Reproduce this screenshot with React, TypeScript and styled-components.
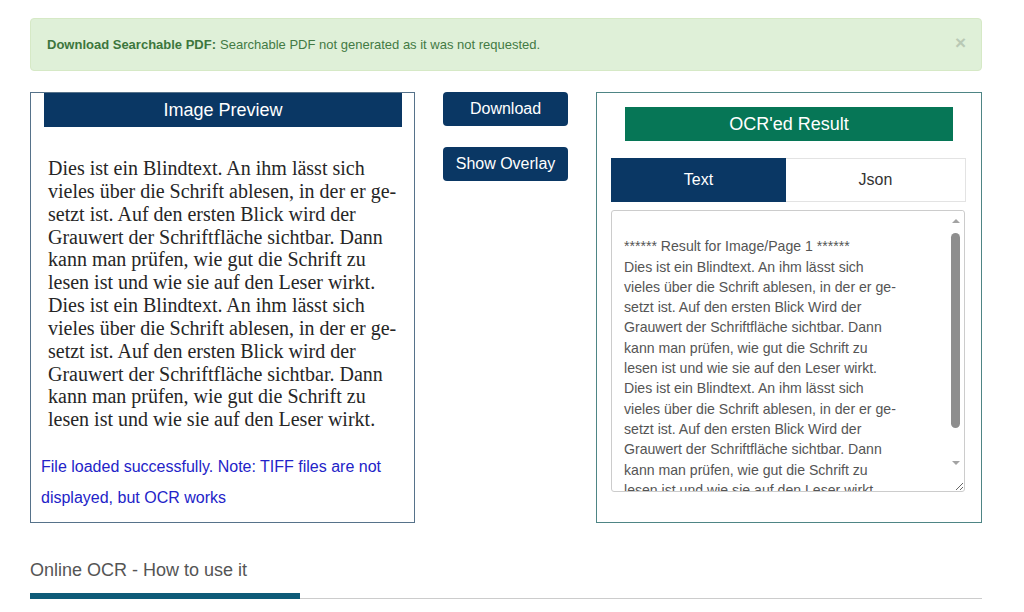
import React from 'react'
import styled, { createGlobalStyle } from 'styled-components'

const GlobalStyle = createGlobalStyle`
  html, body {
    margin: 0;
    padding: 0;
    background: #ffffff;
    font-family: "Liberation Sans", Arial, sans-serif;
  }
`

const navy = '#0a3764'

const Page = styled.div`
  width: 952px;
  padding: 18px 0 0 30px;
`

const Alert = styled.div`
  position: relative;
  height: 53px;
  box-sizing: border-box;
  padding: 0 16px;
  display: flex;
  align-items: center;
  background: #dff0d8;
  border: 1px solid #d6e9c6;
  border-radius: 4px;
  color: #437a44;
  font-size: 13px;

  strong {
    font-weight: bold;
    color: #3c763d;
    margin-right: 4px;
  }
`

const Close = styled.span`
  position: absolute;
  right: 15px;
  top: 13px;
  font-size: 19px;
  font-weight: bold;
  color: #b9c9b5;
`

const Row = styled.div`
  display: grid;
  grid-template-columns: 385px 181px 386px;
  margin-top: 21px;
`

const Panel = styled.div<{ $border: string }>`
  height: 431px;
  box-sizing: border-box;
  border: 1px solid ${(p) => p.$border};
`

const LeftPanel = styled(Panel)`
  padding: 0 12px 0 13px;
`

const RightPanel = styled(Panel)`
  padding: 14px 15px 0 14px;
`

const Bar = styled.div<{ $bg: string }>`
  height: 34px;
  display: flex;
  align-items: center;
  justify-content: center;
  background: ${(p) => p.$bg};
  color: #ffffff;
  font-size: 18px;
`

const ResultBar = styled(Bar)`
  margin: 0 13px 0 14px;
`

const SerifText = styled.div`
  margin: 30px 0 0 4px;
  font-family: "Liberation Serif", "Times New Roman", serif;
  font-size: 20px;
  line-height: 22.85px;
  color: #262626;
  white-space: nowrap;
`

const Note = styled.div`
  margin: 20px 0 0 -3px;
  color: #2323c8;
  font-size: 16px;
  line-height: 31px;
`

const Middle = styled.div`
  display: flex;
  flex-direction: column;
  gap: 21px;
  padding-left: 28px;
`

const Button = styled.button`
  width: 125px;
  height: 34px;
  border: none;
  border-radius: 4px;
  background: ${navy};
  color: #ffffff;
  font-family: "Liberation Sans", Arial, sans-serif;
  font-size: 16px;
  padding: 0;
`

const Tabs = styled.div`
  display: grid;
  grid-template-columns: 174px 1fr;
  height: 44px;
  margin-top: 17px;
  border: 1px solid #e3e3e3;
  box-sizing: border-box;
`

const Tab = styled.div<{ $active?: boolean }>`
  display: flex;
  align-items: center;
  justify-content: center;
  font-size: 16px;
  margin: ${(p) => (p.$active ? '-1px 0 -1px -1px' : '0')};
  background: ${(p) => (p.$active ? navy : '#ffffff')};
  color: ${(p) => (p.$active ? '#ffffff' : '#333333')};
`

const ResultBox = styled.div`
  position: relative;
  width: 354px;
  height: 282px;
  margin-top: 8px;
`

const ResultText = styled.textarea`
  display: block;
  width: 100%;
  height: 100%;
  box-sizing: border-box;
  padding: 5px 12px;
  border: 1px solid #cccccc;
  border-radius: 3px;
  font-family: "Liberation Sans", Arial, sans-serif;
  font-size: 14.1px;
  line-height: 20.3px;
  color: #555555;
  resize: vertical;
  overflow: hidden;
  outline: none;
`

const Scroll = styled.div`
  position: absolute;
  top: 1px;
  right: 2px;
  bottom: 17px;
  width: 15px;
  display: flex;
  flex-direction: column;
  align-items: center;
  background: #ffffff;
  pointer-events: none;
`

const Arrow = styled.div<{ $down?: boolean }>`
  width: 0;
  height: 0;
  border-left: 4px solid transparent;
  border-right: 4px solid transparent;
  ${(p) => (p.$down ? 'border-top: 4px solid #a3a3a3;' : 'border-bottom: 4px solid #a3a3a3;')}
  margin: ${(p) => (p.$down ? 'auto 0 10px' : '8px 0 0')};
`

const Thumb = styled.div`
  width: 9px;
  height: 195px;
  margin-top: 10px;
  border-radius: 5px;
  background: #8e8e8e;
`

const HowTo = styled.div`
  margin-top: 37px;
  font-size: 18px;
  color: #555555;
`

const TabLine = styled.div`
  margin-top: 12px;
  height: 6px;
  display: flex;
  align-items: flex-end;
`

const TabLineActive = styled.div`
  width: 270px;
  height: 6px;
  background: #0e5b78;
`

const TabLineRest = styled.div`
  flex: 1;
  height: 1px;
  background: #cccccc;
`

const serifLines = [
  'Dies ist ein Blindtext. An ihm lässt sich',
  'vieles über die Schrift ablesen, in der er ge-',
  'setzt ist. Auf den ersten Blick wird der',
  'Grauwert der Schriftfläche sichtbar. Dann',
  'kann man prüfen, wie gut die Schrift zu',
  'lesen ist und wie sie auf den Leser wirkt.',
]

const ocrText = [
  '',
  '****** Result for Image/Page 1 ******',
  'Dies ist ein Blindtext. An ihm lässt sich',
  'vieles über die Schrift ablesen, in der er ge-',
  'setzt ist. Auf den ersten Blick Wird der',
  'Grauwert der Schriftfläche sichtbar. Dann',
  'kann man prüfen, wie gut die Schrift zu',
  'lesen ist und wie sie auf den Leser wirkt.',
  'Dies ist ein Blindtext. An ihm lässt sich',
  'vieles über die Schrift ablesen, in der er ge-',
  'setzt ist. Auf den ersten Blick Wird der',
  'Grauwert der Schriftfläche sichtbar. Dann',
  'kann man prüfen, wie gut die Schrift zu',
  'lesen ist und wie sie auf den Leser wirkt.',
  '',
].join('\n')

const App: React.FC = () => {
  return (
    <>
      <GlobalStyle />
      <Page>
        <Alert>
          <strong>Download Searchable PDF:</strong> Searchable PDF not generated as it was not requested.
          <Close>×</Close>
        </Alert>

        <Row>
          <LeftPanel $border="#56728a">
            <Bar $bg={navy}>Image Preview</Bar>
            <SerifText>
              {[...serifLines, ...serifLines].map((line, i) => (
                <div key={i}>{line}</div>
              ))}
            </SerifText>
            <Note>
              File loaded successfully. Note: TIFF files are not
              <br />
              displayed, but OCR works
            </Note>
          </LeftPanel>

          <Middle>
            <Button>Download</Button>
            <Button>Show Overlay</Button>
          </Middle>

          <RightPanel $border="#4e8585">
            <ResultBar $bg="#067656">OCR'ed Result</ResultBar>
            <Tabs>
              <Tab $active>Text</Tab>
              <Tab>Json</Tab>
            </Tabs>
            <ResultBox>
              <ResultText readOnly value={ocrText} />
              {/* headless browser hides native scrollbars, so draw one */}
              <Scroll>
                <Arrow />
                <Thumb />
                <Arrow $down />
              </Scroll>
            </ResultBox>
          </RightPanel>
        </Row>

        <HowTo>Online OCR - How to use it</HowTo>
        <TabLine>
          <TabLineActive />
          <TabLineRest />
        </TabLine>
      </Page>
    </>
  )
}

export default App
